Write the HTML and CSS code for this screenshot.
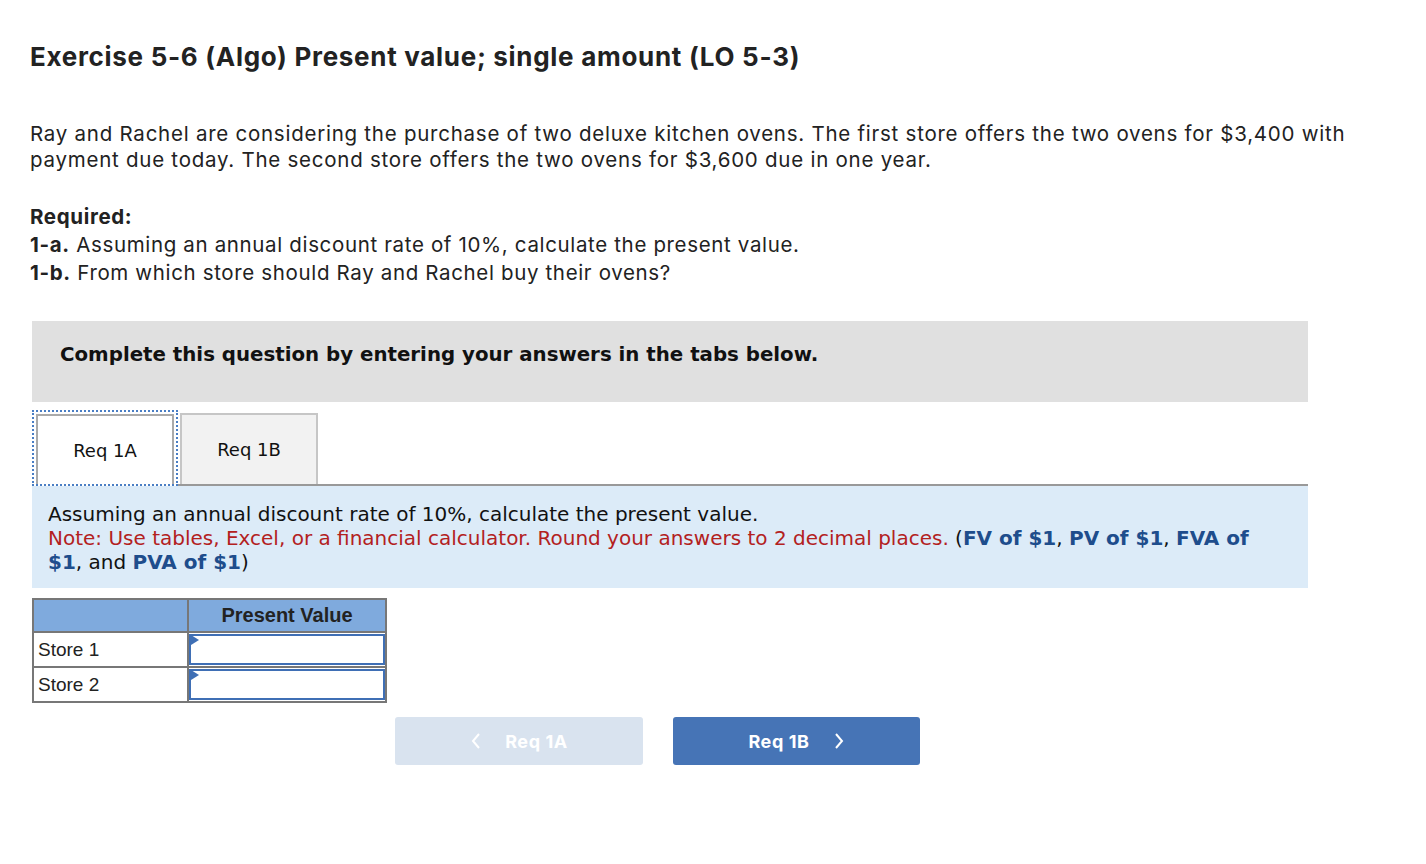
FILE: index.html
```html
<!DOCTYPE html>
<html lang="en">
<head>
<meta charset="utf-8">
<title>Exercise 5-6</title>
<link rel="stylesheet" href="styles.css">
</head>
<body>
<div class="page">
  <h1 class="title">Exercise 5-6 (Algo) Present value; single amount (LO 5-3)</h1>
  <p class="intro">Ray and Rachel are considering the purchase of two deluxe kitchen ovens. The first store offers the two ovens for $3,400 with payment due today. The second store offers the two ovens for $3,600 due in one year.</p>
  <div class="required">
    <div class="req-head">Required:</div>
    <div><b>1-a.</b> Assuming an annual discount rate of 10%, calculate the present value.</div>
    <div><b>1-b.</b> From which store should Ray and Rachel buy their ovens?</div>
  </div>

  <div class="question">
    <div class="banner">Complete this question by entering your answers in the tabs below.</div>
    <div class="tabs">
      <div class="tab active"><span>Req 1A</span></div>
      <div class="tab"><span>Req 1B</span></div>
    </div>
    <div class="instructions">
      <div>Assuming an annual discount rate of 10%, calculate the present value.</div>
      <div><span class="note">Note: Use tables, Excel, or a financial calculator. Round your answers to 2 decimal places.</span> (<b class="link">FV of $1</b>, <b class="link">PV of $1</b>, <b class="link">FVA of</b></div>
      <div><b class="link">$1</b>, and <b class="link">PVA of $1</b>)</div>
    </div>
    <table class="grid">
      <tr class="head"><th class="c1"></th><th class="c2">Present Value</th></tr>
      <tr><td class="c1">Store 1</td><td class="c2 input"><div class="box"></div></td></tr>
      <tr><td class="c1">Store 2</td><td class="c2 input"><div class="box"></div></td></tr>
    </table>
    <div class="nav">
      <div class="btn prev"><svg width="12" height="18" viewBox="0 0 12 18"><path d="M9 2 L3 9 L9 16" fill="none" stroke="currentColor" stroke-width="2"/></svg><span>Req 1A</span></div>
      <div class="btn next"><span>Req 1B</span><svg width="12" height="18" viewBox="0 0 12 18"><path d="M3 2 L9 9 L3 16" fill="none" stroke="currentColor" stroke-width="2"/></svg></div>
    </div>
  </div>
</div>
</body>
</html>
```
FILE: styles.css
```css
html, body { margin: 0; padding: 0; background: #fff; }
.page { padding: 38px 0 0 30px; width: 1330px; color: #222; font-family: "Inter", "Lato", sans-serif; }
.title { font-size: 26px; font-weight: 700; margin: 0 0 45px; line-height: 38px; color: #222; letter-spacing: 0.7px; }
.intro { font-size: 20.5px; line-height: 26px; margin: 0 0 30px; width: 1340px; letter-spacing: 0.75px; }
.required { font-size: 20.5px; line-height: 28px; letter-spacing: 0.65px; }
.required b, .req-head { font-weight: 700; }
.question { margin: 34px 0 0 2px; width: 1276px; }
.banner { background: #e0e0e0; height: 81px; box-sizing: border-box; padding: 22px 28px 0; font-family: "DejaVu Sans", Verdana, sans-serif; font-weight: 700; font-size: 19.8px; line-height: 24px; color: #111; }
.tabs { display: flex; margin-top: 9px; border-bottom: 2px solid #999; height: 73px; align-items: flex-end; }
.tab { width: 138px; height: 71px; box-sizing: border-box; border: 2px solid #c6c6c6; border-bottom: none; background: #f2f2f2; display: flex; align-items: center; justify-content: center; font-family: "DejaVu Sans", Verdana, sans-serif; font-size: 18px; color: #111; margin-left: 2px; }
.tab.active { width: 146px; background: #fff; border: 2px dotted #4a7ec4; margin: 0 0 -2px; height: 76px; }
.tab.active span { display: flex; align-items: center; justify-content: center; width: 138px; height: 70px; border: 2px solid #aaa; border-bottom: none; box-sizing: border-box; margin-top: 2px; }
.instructions { background: #dcebf8; padding: 16px 16px 14px 16px; font-family: "DejaVu Sans", Verdana, sans-serif; font-size: 20px; line-height: 24px; color: #111; }
.instructions div { white-space: nowrap; }
.note { color: #b3211e; }
.link { color: #1e4d8c; font-weight: 700; }
.grid { border-collapse: collapse; margin-top: 10px; font-family: "Liberation Sans", Arial, sans-serif; font-size: 19px; }
.grid th, .grid td { border: 2px solid #777; padding: 0; height: 33px; }
.grid .head th { background: #7faadd; font-weight: 700; color: #222; height: 31px; font-size: 20px; }
.grid .c1 { width: 149px; text-align: left; padding-left: 4px; }
.grid .c2 { width: 196px; }
.grid td.input { padding: 0; position: relative; }
.box { height: 31px; border: 2px solid #3f6fb5; box-sizing: border-box; margin: 0; background: #fff; }
.grid td.input::before { content: ""; position: absolute; left: 2px; top: 2px; border-left: 8px solid #3f6fb5; border-top: 5px solid transparent; border-bottom: 5px solid transparent; }
.nav { display: flex; gap: 30px; margin: 14px 0 0 363px; }
.btn { width: 248px; height: 48px; border-radius: 3px; display: flex; align-items: center; justify-content: center; gap: 23px; font-family: "Inter", sans-serif; font-weight: 700; font-size: 18px; letter-spacing: 0.6px; color: #fff; }
.btn.prev { background: #d9e3ef; color: #fff; }
.btn.next { background: #4674b6; width: 247px; }
```
